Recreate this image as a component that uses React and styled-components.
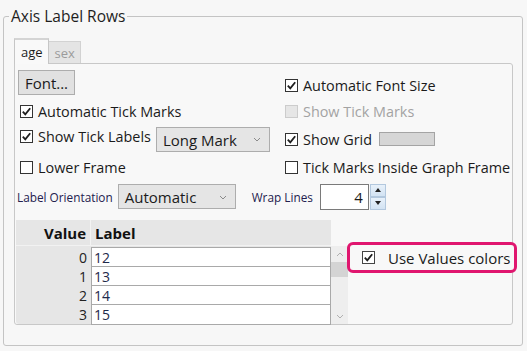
import React from 'react';
import styled, { createGlobalStyle } from 'styled-components';

const GlobalStyle = createGlobalStyle`
  body {
    margin: 0;
    background: #f7f7f7;
    font-family: "Open Sans", "Noto Sans", sans-serif;
    color: #1b1b1b;
  }
`;

const CheckMark = () => (
  <svg width="11" height="11" viewBox="0 0 11 11">
    <path d="M1.8 5.6 L4.3 8.4 L9.2 2.2" fill="none" stroke="#1e1e1e" strokeWidth="1.8" />
  </svg>
);

const Chevron = () => (
  <svg width="8" height="5" viewBox="0 0 8 5">
    <path d="M1 1 L4 4 L7 1" fill="none" stroke="#8a8a8a" strokeWidth="1" />
  </svg>
);

const Check = ({ checked, disabled, label, raised }) => (
  <CheckLabel disabled={disabled} raised={raised}>
    <Box disabled={disabled}>{checked && <CheckMark />}</Box>
    {label}
  </CheckLabel>
);

const App = () => {
  const rows = [
    ['0', '12'],
    ['1', '13'],
    ['2', '14'],
    ['3', '15'],
  ];

  return (
    <Page>
      <GlobalStyle />
      <GroupBox>
        <Legend>Axis Label Rows</Legend>
        <Inner>
          <TabStrip>
            <Tab active>age</Tab>
            <Tab>sex</Tab>
          </TabStrip>
          <TabPanel>
            <OptionsGrid>
              <Cell>
                <Button>Font...</Button>
              </Cell>
              <Cell right low>
                <Check checked label="Automatic Font Size" />
              </Cell>
              <Cell>
                <Check checked label="Automatic Tick Marks" />
              </Cell>
              <Cell right>
                <Check disabled label="Show Tick Marks" />
              </Cell>
              <Cell>
                <Check checked raised label="Show Tick Labels" />
                <Select width={114}>
                  Long Mark
                  <Chevron />
                </Select>
              </Cell>
              <Cell right>
                <Check checked label="Show Grid" />
                <Swatch />
              </Cell>
              <Cell>
                <Check label="Lower Frame" />
              </Cell>
              <Cell right>
                <Check label="Tick Marks Inside Graph Frame" />
              </Cell>
            </OptionsGrid>

            <OrientationRow>
              <SmallLabel>Label Orientation</SmallLabel>
              <Select width={118}>
                Automatic
                <Chevron />
              </Select>
              <SmallLabel wrap>Wrap Lines</SmallLabel>
              <NumberField>4</NumberField>
              <Spinner>
                <SpinButton>
                  <svg width="6" height="4" viewBox="0 0 6 4">
                    <path d="M0 4 L3 0 L6 4 Z" fill="#222" />
                  </svg>
                </SpinButton>
                <SpinButton>
                  <svg width="6" height="4" viewBox="0 0 6 4">
                    <path d="M0 0 L3 4 L6 0 Z" fill="#222" />
                  </svg>
                </SpinButton>
              </Spinner>
            </OrientationRow>

            <Table>
              <TableHeader>
                <HeadCell align="right">Value</HeadCell>
                <HeadCell divider>Label</HeadCell>
              </TableHeader>
              <TableBody>
                <Rows>
                  {rows.map(([v, l]) => (
                    <Row key={v}>
                      <IndexCell>{v}</IndexCell>
                      <LabelCell>{l}</LabelCell>
                    </Row>
                  ))}
                </Rows>
                <ScrollBar>
                  <ScrollArrow>
                    <svg width="8" height="5" viewBox="0 0 8 5">
                      <path d="M1 4 L4 1 L7 4" fill="none" stroke="#b0b0b0" strokeWidth="1" />
                    </svg>
                  </ScrollArrow>
                  <Thumb />
                  <ScrollSpacer />
                  <ScrollArrow>
                    <svg width="8" height="5" viewBox="0 0 8 5">
                      <path d="M1 1 L4 4 L7 1" fill="none" stroke="#b0b0b0" strokeWidth="1" />
                    </svg>
                  </ScrollArrow>
                </ScrollBar>
              </TableBody>
            </Table>

            <Highlight>
              <Box dark>
                <CheckMark />
              </Box>
              <HighlightText>Use Values colors</HighlightText>
            </Highlight>
          </TabPanel>
        </Inner>
      </GroupBox>
    </Page>
  );
};

const Page = styled.div`
  padding: 6px 0 0 3px;
  width: 520px;
`;

const GroupBox = styled.fieldset`
  margin: 0;
  padding: 0;
  width: 520px;
  box-sizing: border-box;
  border: 1px solid #c4c4c4;
  border-radius: 3px;
  min-inline-size: 0;
`;

const Legend = styled.legend`
  margin-left: 5px;
  padding: 0 2px;
  font-size: 15.5px;
  line-height: 20px;
  color: #1e1e1e;
`;

const Inner = styled.div`
  padding: 12px 9px 20px 10px;
`;

const TabStrip = styled.div`
  display: flex;
  align-items: flex-end;
  height: 25px;
`;

const Tab = styled.div`
  box-sizing: border-box;
  display: flex;
  align-items: center;
  font-size: 13px;
  position: relative;
  z-index: ${(p) => (p.active ? 2 : 1)};
  height: ${(p) => (p.active ? '26px' : '22px')};
  margin-bottom: ${(p) => (p.active ? '-1px' : '0')};
  padding: ${(p) => (p.active ? '0 5px 1px 6px' : '0 5px 0 6px')};
  background: ${(p) => (p.active ? '#f9f9f9' : '#e4e4e4')};
  color: ${(p) => (p.active ? '#1b1b1b' : '#9b9b9b')};
  border: 1px solid ${(p) => (p.active ? '#c6c6c6' : '#d2d2d2')};
  border-bottom: none;
  border-left: ${(p) => (p.active ? '1px solid #c6c6c6' : 'none')};
  border-top: ${(p) => (p.active ? '2px solid #d4d4d4' : '1px solid #d2d2d2')};
`;

const TabPanel = styled.div`
  position: relative;
  box-sizing: border-box;
  height: 262px;
  padding-top: 6px;
  background: #f8f8f8;
  border: 1px solid #c8c8c8;
  border-radius: 0 3px 3px 3px;
`;

const OptionsGrid = styled.div`
  display: grid;
  grid-template-columns: 265px 1fr;
  grid-template-rows: 25px 24px 24px 24px;
  row-gap: 4px;
  padding-left: 3px;
`;

const Cell = styled.div`
  display: flex;
  align-items: center;
  gap: 5px;
  padding-top: ${(p) => (p.low ? '6px' : '0')};
`;

const Button = styled.div`
  box-sizing: border-box;
  height: 25px;
  width: 57px;
  display: flex;
  align-items: center;
  justify-content: center;
  font-size: 15px;
  background: #e1e1e1;
  border: 1px solid #adadad;
`;

const CheckLabel = styled.label`
  display: flex;
  align-items: center;
  gap: 5px;
  padding-left: 2px;
  margin-top: ${(p) => (p.raised ? '-5px' : '0')};
  font-size: 14.4px;
  white-space: nowrap;
  color: ${(p) => (p.disabled ? '#a3a3a3' : '#1b1b1b')};
`;

const Box = styled.span`
  box-sizing: border-box;
  width: 13px;
  height: 13px;
  flex: none;
  display: flex;
  align-items: center;
  justify-content: center;
  background: ${(p) => (p.disabled ? '#e6e6e6' : '#fff')};
  border: 1px solid ${(p) => (p.disabled ? '#cccccc' : p.dark ? '#444' : '#333')};
`;

const Select = styled.div`
  box-sizing: border-box;
  width: ${(p) => p.width}px;
  height: 25px;
  display: flex;
  align-items: center;
  justify-content: space-between;
  padding: 1px 8px 0 6px;
  font-size: 15px;
  background: #e5e5e5;
  border: 1px solid #adadad;
`;

const Swatch = styled.span`
  box-sizing: border-box;
  width: 56px;
  height: 14px;
  margin-left: 2px;
  background: #d6d6d6;
  border: 1px solid #a4a4a4;
`;

const OrientationRow = styled.div`
  display: flex;
  align-items: center;
  height: 25px;
  margin-top: 5px;
  padding-left: 2px;
`;

const SmallLabel = styled.span`
  font-size: 11.8px;
  color: #23204e;
  margin-left: ${(p) => (p.wrap ? '16px' : '0')};
  margin-right: ${(p) => (p.wrap ? '7px' : '5px')};
`;

const NumberField = styled.div`
  box-sizing: border-box;
  width: 49px;
  height: 26px;
  display: flex;
  align-items: center;
  justify-content: flex-end;
  padding-right: 5px;
  font-size: 15px;
  background: #fff;
  border: 1px solid #7a7a7a;
`;

const Spinner = styled.div`
  display: flex;
  flex-direction: column;
  margin-left: 1px;
`;

const SpinButton = styled.div`
  box-sizing: border-box;
  width: 16px;
  height: 13px;
  display: flex;
  align-items: center;
  justify-content: center;
  background: linear-gradient(#e8f1fa, #d3e3f3);
  border: 1px solid #b3c8de;
`;

const Table = styled.div`
  margin: 11px 0 0 1px;
  width: 332px;
`;

const TableHeader = styled.div`
  display: grid;
  grid-template-columns: 74px 1fr;
  width: 315px;
  height: 25px;
  background: #e6e6e6;
  border-bottom: 1px solid #f2f2f2;
`;

const HeadCell = styled.div`
  display: flex;
  align-items: center;
  justify-content: ${(p) => (p.align === 'right' ? 'flex-end' : 'flex-start')};
  padding: 0 4px 0 4px;
  font-size: 15px;
  font-weight: 700;
  color: #111;
  border-left: ${(p) => (p.divider ? '1px solid #f3f3f3' : 'none')};
`;

const TableBody = styled.div`
  display: flex;
  height: 78px;
`;

const Rows = styled.div`
  width: 315px;
  display: flex;
  flex-direction: column;
  gap: 1px;
  padding-top: 1px;
  background: #e6e6e6;
  border-radius: 0 0 0 3px;
`;

const Row = styled.div`
  display: grid;
  grid-template-columns: 75px 1fr;
  height: 18px;
`;

const IndexCell = styled.div`
  display: flex;
  align-items: center;
  justify-content: flex-end;
  padding-right: 4px;
  font-size: 14px;
  color: #222;
`;

const LabelCell = styled.div`
  box-sizing: border-box;
  display: flex;
  align-items: center;
  padding-left: 2px;
  font-size: 14px;
  color: #1f2a4a;
  background: #fff;
  border: 1px solid #a9a9a9;
`;

const ScrollBar = styled.div`
  width: 17px;
  display: flex;
  flex-direction: column;
  background: #eeeeee;
`;

const ScrollArrow = styled.div`
  height: 16px;
  display: flex;
  align-items: center;
  justify-content: center;
`;

const Thumb = styled.div`
  height: 15px;
  background: #d4d4d4;
`;

const ScrollSpacer = styled.div`
  flex: 1;
`;

const Highlight = styled.div`
  position: absolute;
  left: 332px;
  top: 178px;
  box-sizing: border-box;
  width: 170px;
  height: 31px;
  display: flex;
  align-items: center;
  padding-left: 12px;
  border: 3px solid #e0166f;
  border-radius: 6px;
  background: #f8f8f8;
`;

const HighlightText = styled.span`
  margin-left: 13px;
  font-size: 15px;
  color: #1b1b1b;
`;

export default App;
